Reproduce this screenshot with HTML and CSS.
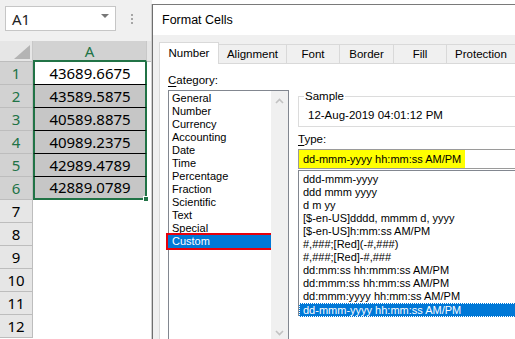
FILE: index.html
```html
<!DOCTYPE html>
<html lang="en">
<head>
  <meta charset="UTF-8">
  <title>Format Cells</title>
  <link rel="stylesheet" href="styles.css">
</head>
<body>
  <div class="screen">

    <div class="sheet">
      <div class="formula-row">
        <div class="name-box">
          <span>A1</span>
          <span class="caret"></span>
        </div>
        <div class="grip"><i></i><i></i><i></i></div>
      </div>

      <div class="grid">
        <div class="corner">
          <svg width="16" height="14" viewBox="0 0 16 14"><polygon points="16,0 16,14 0,14" fill="#b4b4b4"/></svg>
        </div>
        <div class="col-head sel">A</div>
        <div class="col-head"></div>

        <div class="row-head sel">1</div><div class="cell active first">43689.6675</div><div class="cell-gap"></div>
        <div class="row-head sel">2</div><div class="cell shaded">43589.5875</div><div class="cell-gap"></div>
        <div class="row-head sel">3</div><div class="cell shaded">40589.8875</div><div class="cell-gap"></div>
        <div class="row-head sel">4</div><div class="cell shaded">40989.2375</div><div class="cell-gap"></div>
        <div class="row-head sel">5</div><div class="cell shaded">42989.4789</div><div class="cell-gap"></div>
        <div class="row-head sel">6</div><div class="cell shaded last">42889.0789<span class="handle"></span></div><div class="cell-gap"></div>
        <div class="row-head">7</div><div class="cell"></div><div class="cell-gap"></div>
        <div class="row-head">8</div><div class="cell"></div><div class="cell-gap"></div>
        <div class="row-head">9</div><div class="cell"></div><div class="cell-gap"></div>
        <div class="row-head">10</div><div class="cell"></div><div class="cell-gap"></div>
        <div class="row-head">11</div><div class="cell"></div><div class="cell-gap"></div>
        <div class="row-head">12</div><div class="cell"></div><div class="cell-gap"></div>
      </div>
    </div>

    <div class="dialog">
      <div class="title-bar">Format Cells</div>
      <div class="dialog-body">
        <div class="tabs">
          <div class="tab active" style="width: 60px">Number</div>
          <div class="tab" style="width: 69px">Alignment</div>
          <div class="tab" style="width: 54px">Font</div>
          <div class="tab" style="width: 55px">Border</div>
          <div class="tab" style="width: 54px">Fill</div>
          <div class="tab" style="width: 70px">Protection</div>
        </div>

        <div class="panel">
          <div class="category">
            <div class="label"><u>C</u>ategory:</div>
            <div class="listbox">
              <ul class="cat-list">
                <li>General</li>
                <li>Number</li>
                <li>Currency</li>
                <li>Accounting</li>
                <li>Date</li>
                <li>Time</li>
                <li>Percentage</li>
                <li>Fraction</li>
                <li>Scientific</li>
                <li>Text</li>
                <li>Special</li>
                <li class="picked">Custom</li>
              </ul>
              <div class="scrollbar">
                <svg width="9" height="6" viewBox="0 0 9 6"><polyline points="1,5 4.5,1.5 8,5" fill="none" stroke="#c2c2c2" stroke-width="1.6"/></svg>
                <svg width="9" height="6" viewBox="0 0 9 6"><polyline points="1,1 4.5,4.5 8,1" fill="none" stroke="#c2c2c2" stroke-width="1.6"/></svg>
              </div>
            </div>
          </div>

          <div class="details">
            <fieldset class="sample">
              <legend>Sample</legend>
              <div class="sample-value">12-Aug-2019 04:01:12 PM</div>
            </fieldset>

            <div class="label type-label"><u>T</u>ype:</div>
            <div class="type-input"><span class="mark">dd-mmm-yyyy hh:mm:ss AM/PM</span></div>

            <ul class="type-list">
              <li>ddd-mmm-yyyy</li>
              <li>ddd mmm yyyy</li>
              <li>d m yy</li>
              <li>[$-en-US]dddd, mmmm d, yyyy</li>
              <li>[$-en-US]h:mm:ss AM/PM</li>
              <li>#,###;[Red](-#,###)</li>
              <li>#,###;[Red]-#,###</li>
              <li>dd:mm:ss hh:mmm:ss AM/PM</li>
              <li>dd:mmm:ss hh:mm:ss AM/PM</li>
              <li>dd:mmm:yyyy hh:mm:ss AM/PM</li>
              <li class="picked">dd-mmm-yyyy hh:mm:ss AM/PM</li>
            </ul>
          </div>
        </div>
      </div>
    </div>

  </div>
</body>
</html>
```

FILE: styles.css
```css
* { box-sizing: border-box; }
html, body { margin: 0; padding: 0; }
body { width: 515px; height: 339px; overflow: hidden; background: #fff; font-family: "Noto Sans", sans-serif; }
.screen { display: flex; height: 339px; }

/* spreadsheet side */
.sheet { width: 152px; flex: none; display: flex; flex-direction: column; background: #fff; }
.formula-row { height: 41px; background: #f0f0f0; display: flex; align-items: flex-start; padding: 6px 0 0 5px; }
.name-box {
  width: 111px; height: 25px; background: #fff; border: 1px solid #c6c6c6;
  display: flex; align-items: center; justify-content: space-between;
  padding: 0 6px 0 6px; font-size: 15px; color: #222;
}
.caret { width: 0; height: 0; border-left: 4px solid transparent; border-right: 4px solid transparent; border-top: 4px solid #777; margin-top: -5px; }
.grip { display: flex; flex-direction: column; gap: 2px; margin: 8px 0 0 15px; }
.grip i { width: 2px; height: 2px; background: #a6a6a6; display: block; }

.grid { display: grid; grid-template-columns: 33px 114px 5px; grid-template-rows: 21px repeat(12, 23px); }
.corner { background: #e6e6e6; border-right: 1px solid #c8c8c8; border-bottom: 1px solid #bdbdbd; display: flex; align-items: flex-end; justify-content: flex-end; padding: 0 2px 2px 0; }
.col-head { background: #e6e6e6; border-bottom: 1px solid #bdbdbd; border-right: 1px solid #c8c8c8; text-align: center; font-size: 15px; line-height: 20px; }
.col-head.sel { background: #d2d2d2; color: #217346; border-bottom: 2px solid #217346; }
.row-head { background: #e6e6e6; border-right: 1px solid #bdbdbd; border-bottom: 1px solid #bdbdbd; text-align: center; font-size: 15px; line-height: 22px; color: #000; }
.row-head.sel { background: #d2d2d2; color: #217346; }
.cell { position: relative; font-size: 15px; text-align: center; line-height: 22px; color: #000; }
.cell.active, .cell.shaded { border-left: 2px solid #217346; border-right: 2px solid #217346; border-bottom: 1px solid #000; }
.cell.shaded { background: #c6c6c6; }
.cell.last { border-bottom: 2px solid #217346; line-height: 21px; }
.cell-gap { background: #fff; }
.handle { position: absolute; right: -4px; bottom: -4px; width: 6px; height: 6px; background: #217346; border: 1px solid #fff; }

/* dialog */
.dialog { flex: 1; margin-top: 4px; border-top: 1px solid #7a7a7a; border-left: 1px solid #6e6e6e; background: #f0f0f0; overflow: hidden; box-shadow: -1px 0 0 #cfcfcf; }
.title-bar { height: 30px; background: #fff; padding-left: 9px; font-family: "Liberation Sans", sans-serif; font-size: 12.5px; line-height: 30px; color: #000; }
.dialog-body { width: 420px; padding: 7px 0 0 6px; font-family: "Liberation Sans", sans-serif; font-size: 11.5px; color: #000; }

.tabs { display: flex; align-items: flex-end; height: 21px; }
.tab { height: 19px; border: 1px solid #d9d9d9; border-bottom: none; margin-left: -1px; text-align: center; line-height: 18px; background: #f0f0f0; }
.tab:first-child { margin-left: 0; }
.tab.active { height: 22px; background: #fff; line-height: 20px; position: relative; z-index: 1; margin-bottom: -1px; }

.panel { height: 300px; background: #fff; border: 1px solid #d9d9d9; padding: 9px 0 0 8px; display: grid; grid-template-columns: 121px 1fr; column-gap: 9px; }
.label { line-height: 15px; }
.label u { text-decoration-thickness: 1px; text-underline-offset: 2px; }

.listbox { margin-top: 2px; height: 252px; border: 1px solid #828790; display: flex; }
.cat-list { list-style: none; margin: 0; padding: 1px 0 0 0; flex: 1; font-size: 11px; }
.cat-list li { height: 13px; line-height: 13px; padding-left: 3px; }
.cat-list li.picked { background: #0078d7; color: #fff; outline: 2px solid #e8000b; outline-offset: 0; margin-left: -1px; padding-left: 4px; }
.scrollbar { width: 17px; background: #f0f0f0; display: flex; flex-direction: column; justify-content: space-between; align-items: center; padding: 7px 0 5px; }

.details { padding-top: 16px; }
.sample { margin: 0; border: 1px solid #dcdcdc; padding: 0 0 4px 9px; height: 38px; min-width: 0; }
.sample legend { padding: 0 1px; margin-left: -4px; line-height: 14px; }
.sample-value { padding-top: 5px; line-height: 14px; }
.type-label { margin-top: 5px; }
.type-input { margin-top: 2px; height: 20px; border: 1px solid #9a9a9a; border-right: none; font-size: 11px; }
.mark { display: inline-block; background: #ffff00; height: 18px; line-height: 18px; padding: 0 4px 0 4px; }
.type-list { list-style: none; margin: 1px 0 0 0; padding: 2px 0 0 0; height: 146px; border: 1px solid #828790; border-right: none; font-size: 11px; }
.type-list li { height: 13px; line-height: 13px; padding-left: 4px; }
.type-list li.picked { background: #0078d7; color: #fff; outline: 1px dotted #fff; outline-offset: -1px; height: 14px; line-height: 14px; }
```
